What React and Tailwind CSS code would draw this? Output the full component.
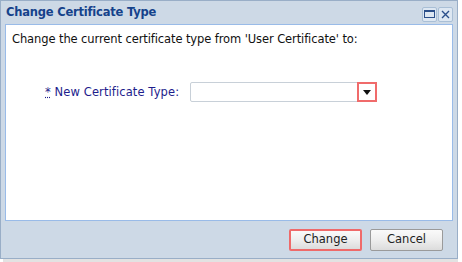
import React from "react";

function ToolButton({ children }) {
  return (
    <div className="w-[15px] h-[15px] flex items-center justify-center rounded-[2px] border border-[#a9bfd6] bg-[#dde7f2]">
      {children}
    </div>
  );
}

function Button({ label, focused }) {
  return (
    <button
      className={
        "w-[73px] h-[22px] rounded-[2px] text-[11.5px] text-[#222] bg-gradient-to-b from-[#fafafa] via-[#eeeeee] to-[#dcdcdc] " +
        (focused ? "border-2 border-[#ef6a6a]" : "border border-[#9a9a9a]")
      }
    >
      {label}
    </button>
  );
}

export default function App() {
  return (
    <div
      className="w-[462px] h-[262px] bg-white relative"
      style={{ fontFamily: '"DejaVu Sans", Verdana, sans-serif' }}
    >
      <div className="w-[458px] h-[259px] flex flex-col bg-[#cdd9e6] border border-[#99aec7]">
        {/* title bar */}
        <div className="h-[23px] flex items-center justify-between pl-[5px] pr-[4px]">
          <span className="text-[11.5px] font-bold text-[#15428b] tracking-[-0.2px]">
            Change Certificate Type
          </span>
          <div className="flex gap-[1px] mt-[3px]">
            <ToolButton>
              <div className="w-[11px] h-[8px] border border-[#2b4f8a] border-t-2" />
            </ToolButton>
            <ToolButton>
              <svg width="11" height="11" viewBox="0 0 11 11">
                <path d="M2 2 L9 9 M9 2 L2 9" stroke="#2b4f8a" strokeWidth="1.4" />
              </svg>
            </ToolButton>
          </div>
        </div>
        {/* content */}
        <div className="mx-[4px] h-[197px] bg-white border border-[#99bbe8] text-[11.5px] text-[#111]">
          <p className="pl-[6px] pt-[6px] tracking-[-0.1px]">
            Change the current certificate type from 'User Certificate' to:
          </p>
          <div className="flex items-center mt-[34px] pl-[39px]">
            <span className="text-[#1d1d8c] tracking-[0.1px]">
              <span className="underline decoration-dotted">*</span> New Certificate Type:
            </span>
            <div className="ml-[11px] w-[187px] h-[20px] flex border border-[#c8d0d8] rounded-[2px]">
              <div className="flex-1" />
              <div className="w-[20px] h-[20px] -mt-[1px] -mr-[1px] border-2 border-[#f06b6b] flex items-center justify-center">
                <svg width="8" height="5" viewBox="0 0 8 5">
                  <path d="M0 0 H8 L4 5 Z" fill="#111" />
                </svg>
              </div>
            </div>
          </div>
        </div>
        {/* footer */}
        <div className="flex-1 flex items-center justify-end gap-[8px] pr-[14px] pt-[1px]">
          <Button label="Change" focused />
          <Button label="Cancel" />
        </div>
      </div>
      <div className="ml-[3px] w-[455px] h-[3px] bg-[#e2e2e2]" />
    </div>
  );
}
